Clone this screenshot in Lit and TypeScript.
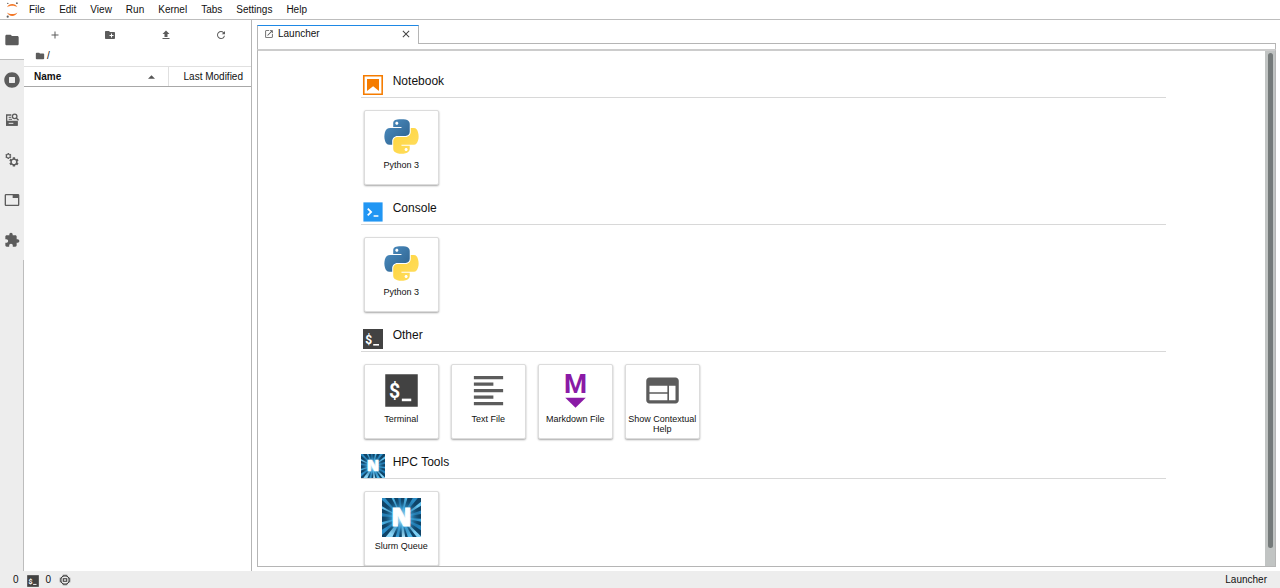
import { LitElement, html, svg, css, nothing, TemplateResult } from "lit";
import { customElement } from "lit/decorators.js";

const glyph = (d: string) => html`<svg viewBox="0 0 24 24" fill="currentColor" aria-hidden="true"><path d=${d}></path></svg>`;

const FOLDER = "M10 4H4c-1.1 0-1.99.9-1.99 2L2 18c0 1.1.9 2 2 2h16c1.1 0 2-.9 2-2V8c0-1.1-.9-2-2-2h-8l-2-2z";
const NEW_FOLDER = "M20 6h-8l-2-2H4c-1.11 0-1.99.89-1.99 2L2 18c0 1.11.89 2 2 2h16c1.11 0 2-.89 2-2V8c0-1.11-.89-2-2-2zm-1 8h-3v3h-2v-3h-3v-2h3V9h2v3h3v2z";
const ADD = "M19 13h-6v6h-2v-6H5v-2h6V5h2v6h6v2z";
const UPLOAD = "M9 16h6v-6h4l-7-7-7 7h4zm-4 2h14v2H5z";
const TAB = "M21 3H3c-1.1 0-2 .9-2 2v14c0 1.1.9 2 2 2h18c1.1 0 2-.9 2-2V5c0-1.1-.9-2-2-2zm0 16H3V5h10v4h8v10z";
const PUZZLE = "M20.5 11H19V7c0-1.1-.9-2-2-2h-4V3.5C13 2.12 11.88 1 10.5 1S8 2.12 8 3.5V5H4c-1.1 0-1.99.9-1.99 2v3.8H3.5c1.49 0 2.7 1.21 2.7 2.7s-1.21 2.7-2.7 2.7H2V20c0 1.1.9 2 2 2h3.8v-1.5c0-1.49 1.21-2.7 2.7-2.7 1.49 0 2.7 1.21 2.7 2.7V22H17c1.1 0 2-.9 2-2v-4h1.5c1.38 0 2.5-1.12 2.5-2.5S21.88 11 20.5 11z";
const OPEN = "M19 19H5V5h7V3H5a2 2 0 00-2 2v14a2 2 0 002 2h14c1.1 0 2-.9 2-2v-7h-2v7zM14 3v2h3.59l-9.83 9.83 1.41 1.41L19 6.41V10h2V3h-7z";
const CLOSE = "M19 6.41L17.59 5 12 10.59 6.41 5 5 6.41 10.59 12 5 17.59 6.41 19 12 13.41 17.59 19 19 17.59 13.41 12z";
const TEXT = "M15 15H3v2h12v-2zm0-8H3v2h12V7zM3 13h18v-2H3v2zm0 8h18v-2H3v2zM3 3v2h18V3H3z";
const INSPECTOR = "M20 4H4c-1.1 0-1.99.9-1.99 2L2 18c0 1.1.9 2 2 2h16c1.1 0 2-.9 2-2V6c0-1.1-.9-2-2-2zm-5 14H4v-4h11v4zm0-5H4V9h11v4zm5 5h-4V9h4v9z";
const GEAR = "M19.43 12.98c.04-.32.07-.64.07-.98s-.03-.66-.07-.98l2.11-1.65c.19-.15.24-.42.12-.64l-2-3.46c-.12-.22-.39-.3-.61-.22l-2.49 1c-.52-.4-1.08-.73-1.69-.98l-.38-2.65C14.46 2.18 14.25 2 14 2h-4c-.25 0-.46.18-.49.42l-.38 2.65c-.61.25-1.17.59-1.69.98l-2.49-1c-.23-.09-.49 0-.61.22l-2 3.46c-.13.22-.07.49.12.64l2.11 1.65c-.04.32-.07.65-.07.98s.03.66.07.98l-2.11 1.65c-.19.15-.24.42-.12.64l2 3.46c.12.22.39.3.61.22l2.49-1c.52.4 1.08.73 1.69.98l.38 2.65c.03.24.24.42.49.42h4c.25 0 .46-.18.49-.42l.38-2.65c.61-.25 1.17-.59 1.69-.98l2.49 1c.23.09.49 0 .61-.22l2-3.46c.12-.22.07-.49-.12-.64l-2.11-1.65zM12 16.5c-2.5 0-4.5-2-4.5-4.5s2-4.5 4.5-4.5 4.500 2 4.500 4.500-2 4.500-4.500 4.500z";

const refreshIcon = html`<svg viewBox="0 0 18 18" fill="currentColor" aria-hidden="true"><path d="M9 13.5c-2.49 0-4.5-2.01-4.5-4.5S6.51 4.5 9 4.5c1.24 0 2.36.52 3.17 1.33L10 8h5V3l-1.76 1.76C12.15 3.68 10.66 3 9 3 5.69 3 3.01 5.69 3.01 9S5.69 15 9 15c2.97 0 5.43-2.16 5.9-5h-1.52c-.46 2-2.24 3.5-4.38 3.5z"></path></svg>`;

const runningIcon = html`<svg viewBox="0 0 512 512" fill="currentColor" aria-hidden="true"><path d="M256 8C119 8 8 119 8 256s111 248 248 248 248-111 248-248S393 8 256 8zm96 328c0 8.8-7.2 16-16 16H176c-8.8 0-16-7.2-16-16V176c0-8.8 7.2-16 16-16h160c8.8 0 16 7.2 16 16v160z"></path></svg>`;

const paletteIcon = html`<svg viewBox="0 0 24 24" fill="none" stroke="currentColor" stroke-width="2" aria-hidden="true">
  <path d="M11 4.500H4v15h15.500V14"></path>
  <path d="M4 14h15.500v5.500H4z" fill="currentColor"></path>
  <path d="M7 8h4M7 11h5" stroke-width="1.500"></path>
  <path d="M7 17h7" stroke="#ededed" stroke-width="1.500"></path>
  <circle cx="16" cy="6.500" r="3.400"></circle>
  <path d="M18.400 9l3.400 3.400"></path>
</svg>`;

const gearsIcon = html`<svg viewBox="0 0 24 24" fill="currentColor" aria-hidden="true">
  <path d=${GEAR} transform="translate(1 .5) scale(.46)"></path>
  <path d=${GEAR} transform="translate(6.500 6.500) scale(.7)"></path>
</svg>`;

const jupyterIcon = html`<svg class="logo" viewBox="0 0 16 18" aria-hidden="true">
  <path d="M3 6.200C4 4 6 2.900 8.200 2.900S12.400 4 13.400 6.200C12 5.200 10.200 4.700 8.200 4.700S4.400 5.200 3 6.200z" fill="#f37726"></path>
  <path d="M3 11.600c1 2.200 3 3.400 5.200 3.400s4.200-1.200 5.200-3.400c-1.400 1-3.200 1.500-5.200 1.500s-3.800-.5-5.200-1.500z" fill="#f37726"></path>
  <circle cx="3.800" cy="2.400" r=".7" fill="#616161"></circle>
  <circle cx="12.900" cy="2.200" r=".9" fill="#616161"></circle>
  <circle cx="3.700" cy="15.700" r="1.100" fill="#616161"></circle>
</svg>`;

const notebookIcon = html`<svg viewBox="0 0 22 22" fill="#f57c00" aria-hidden="true"><path d="M18.700 3.300v15.400H3.300V3.300h15.400m1.500-1.500H1.800v18.300h18.300l.1-18.300z"></path><path d="M16.500 16.500l-5.400-4.300-5.600 4.300v-11h11z"></path></svg>`;

const consoleIcon = html`<svg viewBox="0 0 200 200" aria-hidden="true"><path d="M20 19.800h160v159.900H20z" fill="#2196f3"></path><path d="M105 127.300h40v12.800h-40zM51.100 77L74 99.900l-23.300 23.300 10.500 10.500 23.300-23.300L95 99.900 84.500 89.400 61.600 66.500z" fill="#fff"></path></svg>`;

const terminalIcon = html`<svg viewBox="0 0 24 24" aria-hidden="true"><path d="M2 2h20v20H2z" fill="#424242"></path><text x="4.300" y="16.700" font-size="12" font-family="Roboto, sans-serif" font-weight="700" fill="#fff">$</text><path d="M12.200 17h5.800v1.600h-5.800z" fill="#fff"></path></svg>`;

const markdownIcon = html`<svg viewBox="0 0 24 24" fill="#8a1aa6" aria-hidden="true"><text x="12" y="13.400" text-anchor="middle" font-size="16.200" font-family="Roboto, sans-serif" font-weight="700">M</text><path d="M5.700 16.400h12.600L12 22.600z"></path></svg>`;

const pythonIcon = html`<svg viewBox="12.500 1.500 103 104.500" aria-hidden="true">
  <defs>
    <linearGradient id="blue" x1="0" y1="0" x2="1" y2="1"><stop offset="0" stop-color="#4d8fc4"></stop><stop offset="1" stop-color="#2c5f8a"></stop></linearGradient>
    <linearGradient id="gold" x1="0" y1="0" x2="1" y2="1"><stop offset="0" stop-color="#ffd43b"></stop><stop offset="1" stop-color="#ffde62"></stop></linearGradient>
  </defs>
  <path fill="url(#blue)" d="M63.391 1.988c-4.222.02-8.252.379-11.8 1.007-10.45 1.846-12.346 5.71-12.346 12.837v9.411h24.693v3.137H29.977c-7.176 0-13.46 4.313-15.426 12.521-2.268 9.405-2.368 15.275 0 25.096 1.755 7.311 5.947 12.519 13.124 12.519h8.491V67.234c0-8.151 7.051-15.340 15.426-15.340h24.665c6.866 0 12.346-5.654 12.346-12.548V15.833c0-6.693-5.646-11.720-12.346-12.837-4.244-.706-8.645-1.027-12.866-1.008zM50.037 9.557c2.550 0 4.634 2.117 4.634 4.721 0 2.593-2.083 4.690-4.634 4.690-2.560 0-4.633-2.097-4.633-4.690-.001-2.604 2.073-4.721 4.633-4.721z"></path>
  <path fill="url(#gold)" d="M91.682 28.380v10.966c0 8.500-7.208 15.655-15.426 15.655H51.591c-6.756 0-12.346 5.783-12.346 12.549v23.515c0 6.691 5.818 10.628 12.346 12.547 7.816 2.297 15.312 2.713 24.665 0 6.216-1.801 12.346-5.423 12.346-12.547v-9.412H63.938v-3.138h37.012c7.176 0 9.852-5.005 12.348-12.519 2.578-7.735 2.467-15.174 0-25.096-1.774-7.145-5.161-12.521-12.348-12.521h-9.268zM77.809 87.927c2.561 0 4.634 2.097 4.634 4.692 0 2.602-2.074 4.719-4.634 4.719-2.550 0-4.633-2.117-4.633-4.719 0-2.595 2.083-4.692 4.633-4.692z"></path>
</svg>`;

// Bright streaks fanning out from the centre: angle, half-width, colour.
const rays: [number, number, string][] = [
  [8, 4, "#3aa3dc"], [28, 5, "#2383bd"], [48, 4, "#7fd0f5"], [66, 6, "#4db4e6"], [84, 5, "#a5e2fb"],
  [102, 5, "#3b9fd6"], [122, 7, "#8bd6f8"], [143, 5, "#2d8fca"], [163, 4, "#4fb6e8"], [188, 5, "#2a86bd"],
  [207, 3, "#6cc6f0"], [226, 4, "#2b8cc4"], [246, 3, "#4fb3e3"], [264, 4, "#2176ab"], [283, 4, "#55b9ea"],
  [305, 5, "#2b8cc4"], [325, 4, "#63c2ee"], [345, 5, "#2680b8"],
];
const rayPoints = (angle: number, half: number) => {
  const at = (a: number) => `${20 + 32 * Math.cos((a * Math.PI) / 180)},${20 + 32 * Math.sin((a * Math.PI) / 180)}`;
  return `20,20 ${at(angle - half)} ${at(angle + half)}`;
};
const slurmIcon = html`<svg class="clipped" viewBox="0 0 40 40" aria-hidden="true">
  <defs><radialGradient id="glow"><stop offset="0" stop-color="#d8f4ff"></stop><stop offset=".5" stop-color="#3fa6dc" stop-opacity=".8"></stop><stop offset="1" stop-color="#0f4a73" stop-opacity="0"></stop></radialGradient></defs>
  <rect width="40" height="40" fill="#0f4468"></rect>
  ${rays.map(([a, w, c]) => svg`<polygon points=${rayPoints(a, w)} fill=${c}></polygon>`)}
  <circle cx="20" cy="20" r="20" fill="url(#glow)"></circle>
  <text x="20" y="29" text-anchor="middle" font-size="25" font-family="Open Sans, sans-serif" font-weight="800" fill="#fff" stroke="#fff" stroke-width="1">N</text>
</svg>`;

const chipIcon = html`<svg viewBox="0 0 24 24" fill="none" stroke="#333" stroke-width="2" aria-hidden="true">
  <circle cx="12" cy="12" r="8.200"></circle>
  <path d="M8.500 1.500v3M12 1v3M15.500 1.500v3M8.500 19.500v3M12 20v3M15.500 19.500v3M1.500 8.500h3M1 12h3M1.500 15.500h3M19.500 8.500h3M20 12h3M19.500 15.500h3" stroke-width="1.600"></path>
  <rect x="8.500" y="9.500" width="7" height="5"></rect>
</svg>`;

interface Card { label: string; icon: TemplateResult; kind: string }
interface Section { title: string; icon: TemplateResult; cards: Card[] }

const sections: Section[] = [
  { title: "Notebook", icon: notebookIcon, cards: [{ label: "Python 3", icon: pythonIcon, kind: "python" }] },
  { title: "Console", icon: consoleIcon, cards: [{ label: "Python 3", icon: pythonIcon, kind: "python" }] },
  {
    title: "Other", icon: terminalIcon, cards: [
      { label: "Terminal", icon: terminalIcon, kind: "plain" },
      { label: "Text File", icon: glyph(TEXT), kind: "plain" },
      { label: "Markdown File", icon: markdownIcon, kind: "plain" },
      { label: "Show Contextual Help", icon: glyph(INSPECTOR), kind: "plain" },
    ],
  },
  { title: "HPC Tools", icon: slurmIcon, cards: [{ label: "Slurm Queue", icon: slurmIcon, kind: "plain" }] },
];

@customElement("app-root")
export class AppRoot extends LitElement {
  static styles = css`
    :host { display: flex; flex-direction: column; height: 100vh; overflow: hidden; background: #fff; color: #111; font: 10px/12px "Liberation Sans", Arial, sans-serif; }
    * { box-sizing: border-box; }
    svg { display: block; width: 100%; height: 100%; overflow: visible; }
    .clipped { overflow: hidden; }
    button { margin: 0; padding: 0; border: 0; background: none; font: inherit; color: inherit; display: flex; align-items: center; justify-content: center; }
    .menubar { flex: none; display: flex; align-items: center; height: 20px; padding-left: 4px; border-bottom: 1px solid #bdbdbd; }
    .logo { width: 16px; height: 18px; flex: none; }
    .menus { display: flex; gap: 14px; padding-left: 9px; }
    .work { flex: 1; min-height: 0; display: flex; }
    .rail { flex: none; width: 24px; background: #ededed; display: flex; flex-direction: column; color: #5c5c5c; }
    .rail button { height: 40px; }
    .rail button svg { width: 16px; height: 16px; }
    .rail .current { background: #fff; border-bottom: 1px solid #bdbdbd; }
    .rest { flex: 1; border-right: 1px solid #bdbdbd; }
    .browser { flex: none; width: 228px; border-right: 1px solid #b5b5b5; }
    .tools { display: grid; grid-template-columns: repeat(4, 1fr); height: 29px; padding: 0 2px 0 3px; color: #5c5c5c; }
    .tools svg { width: 12px; height: 12px; }
    .crumbs { display: flex; align-items: center; gap: 2px; height: 17px; padding: 0 0 4px 11px; }
    .crumbs button { width: 10px; height: 10px; color: #5c5c5c; }
    .listing { width: 100%; border-collapse: collapse; table-layout: fixed; }
    .listing th { height: 20px; padding: 0 8px 0 10px; border-top: 1px solid #e0e0e0; border-bottom: 1px solid #a8a8a8; font-weight: 400; text-align: right; }
    .listing .name { width: 144px; border-right: 1px solid #e0e0e0; font-weight: 700; text-align: left; padding-right: 13px; }
    .sort { display: flex; align-items: center; justify-content: space-between; }
    .sort svg { width: 7px; height: 4px; }
    .dock { flex: 1; min-width: 0; display: flex; flex-direction: column; padding: 5px 4px 4px 5px; }
    .tabs { flex: none; display: flex; height: 19px; }
    .tab { width: 162px; display: flex; align-items: center; gap: 4px; padding: 0 6px 3px 6px; border: solid #b5b5b5; border-width: 0 1px; border-top: 1px solid #1e88e5; }
    .tab-icon { width: 10px; height: 10px; color: #555; }
    .tab-title { flex: 1; }
    .tab .shut { width: 12px; height: 12px; color: #444; }
    .fill { flex: 1; border-bottom: 1px solid #b5b5b5; }
    .gutter { flex: none; height: 5px; border: solid #b5b5b5; border-width: 0 1px; }
    .panel { flex: 1; min-height: 0; display: flex; border: solid #b5b5b5; border-width: 2px 1px 1px; border-top-color: #ccc; }
    .launcher { flex: 1; min-width: 0; overflow: hidden; padding-top: 22px; }
    .section { width: 80%; margin: 0 9.8% 15px 10.2%; }
    .head { display: flex; gap: 8px; height: 25px; border-bottom: 1px solid #d8d8d8; }
    .head-icon { width: 24px; height: 24px; }
    .head h2 { margin: 0; font-size: 12px; line-height: 17px; font-weight: 400; }
    .cards { display: flex; flex-wrap: wrap; gap: 12px; padding: 12px 0 0 3px; }
    .card { width: 75px; height: 75px; border: 1px solid #dcdcdc; border-radius: 2px; box-shadow: 0 1px 2px rgba(0, 0, 0, .35); flex-direction: column; justify-content: flex-start; font-size: 9px; line-height: 10px; background: #fff; }
    .card-icon { height: 49px; width: 100%; padding-top: 1px; flex: none; display: grid; place-items: center; color: #5c5c5c; }
    .card-icon svg { width: 39px; height: 39px; }
    .card-icon.python svg { width: 35px; height: 35px; }
    .track { flex: none; width: 10px; padding: 2px 2px 18px 3px; background: #c1c4c3; }
    .thumb { height: 100%; background: #757a7a; border-radius: 3px; }
    .status { flex: none; height: 17px; background: #ededed; display: flex; align-items: center; padding: 0 13px 0 13px; }
    .status .group { display: flex; align-items: center; }
    .status .term { width: 14px; height: 14px; margin: 2px 6px 0 7px; }
    .status .chip { width: 12px; height: 12px; margin: 1px 0 0 8px; }
    .status .mode { margin-left: auto; }
  `;

  private section(s: Section) {
    return html`<section class="section">
      <div class="head"><span class="head-icon">${s.icon}</span><h2>${s.title}</h2></div>
      <div class="cards">${s.cards.map((c) => html`<button class="card"><span class="card-icon ${c.kind}">${c.icon}</span><span>${c.label}</span></button>`)}</div>
    </section>`;
  }

  render() {
    const rail: [string, TemplateResult][] = [
      ["File Browser", glyph(FOLDER)], ["Running", runningIcon], ["Commands", paletteIcon],
      ["Property Inspector", gearsIcon], ["Open Tabs", glyph(TAB)], ["Extensions", glyph(PUZZLE)],
    ];
    return html`
      <header class="menubar">${jupyterIcon}
        <nav class="menus">${["File", "Edit", "View", "Run", "Kernel", "Tabs", "Settings", "Help"].map((m) => html`<button>${m}</button>`)}</nav>
      </header>
      <div class="work">
        <nav class="rail">
          ${rail.map(([label, icon], i) => html`<button class=${i === 0 ? "current" : nothing} aria-label=${label}>${icon}</button>`)}
          <div class="rest"></div>
        </nav>
        <aside class="browser">
          <div class="tools">
            <button aria-label="New Launcher">${glyph(ADD)}</button>
            <button aria-label="New Folder">${glyph(NEW_FOLDER)}</button>
            <button aria-label="Upload">${glyph(UPLOAD)}</button>
            <button aria-label="Refresh">${refreshIcon}</button>
          </div>
          <div class="crumbs"><button aria-label="Home">${glyph(FOLDER)}</button><span>/</span></div>
          <table class="listing"><thead><tr>
            <th class="name" scope="col"><div class="sort">Name<svg viewBox="0 0 8 4" fill="#555" aria-hidden="true"><path d="M0 4l4-4 4 4z"></path></svg></div></th>
            <th scope="col">Last Modified</th>
          </tr></thead></table>
        </aside>
        <main class="dock">
          <div class="tabs">
            <div class="tab"><span class="tab-icon">${glyph(OPEN)}</span><span class="tab-title">Launcher</span><button class="shut" aria-label="Close">${glyph(CLOSE)}</button></div>
            <div class="fill"></div>
          </div>
          <div class="gutter"></div>
          <div class="panel">
            <div class="launcher">${sections.map((s) => this.section(s))}</div>
            <div class="track"><div class="thumb"></div></div>
          </div>
        </main>
      </div>
      <footer class="status">
        <div class="group"><span>0</span><span class="term">${terminalIcon}</span><span>0</span><span class="chip">${chipIcon}</span></div>
        <span class="mode">Launcher</span>
      </footer>`;
  }
}
